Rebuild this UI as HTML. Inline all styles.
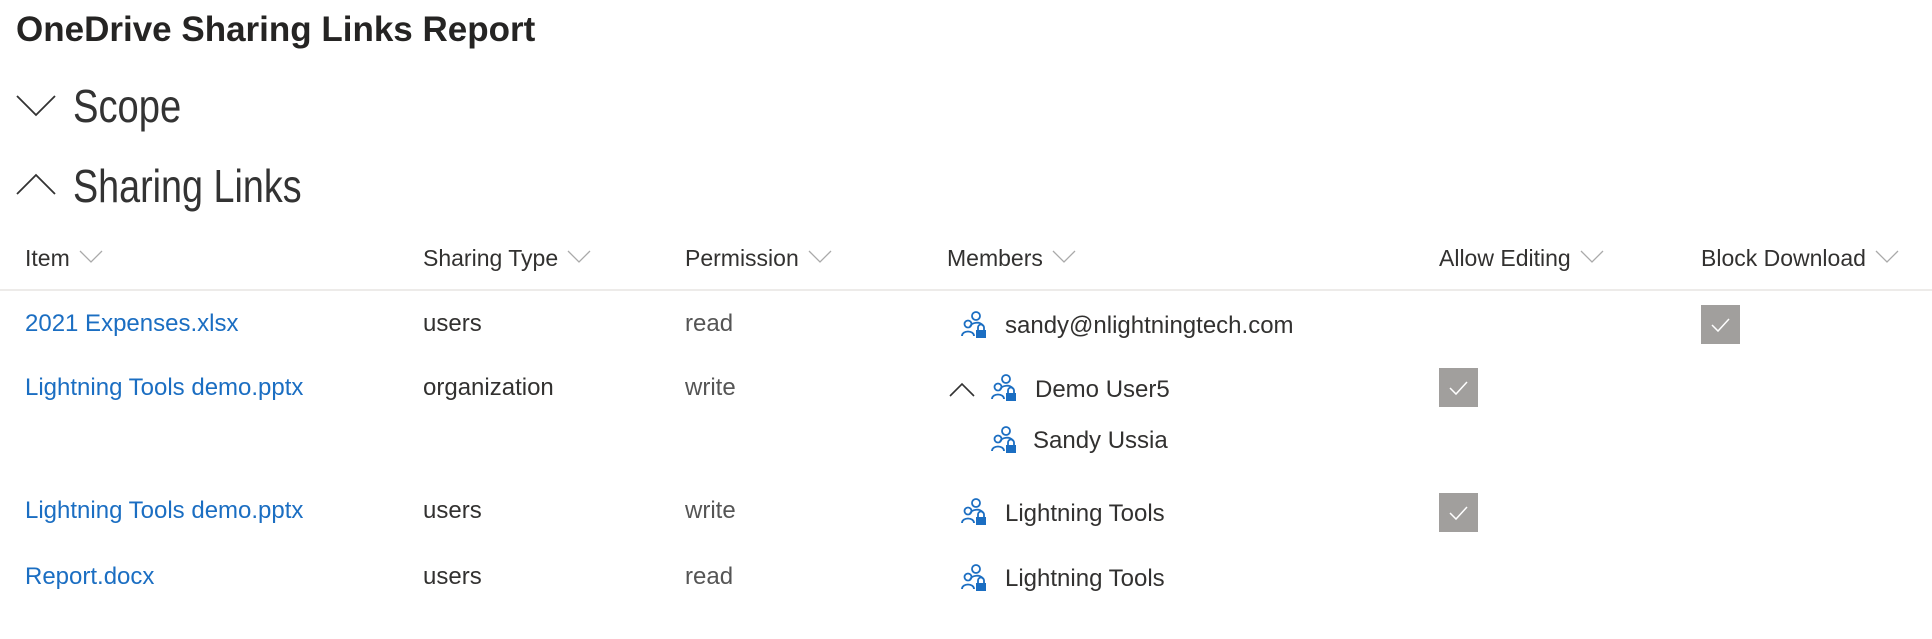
<!DOCTYPE html>
<html><head><meta charset="utf-8"><style>
body{margin:0;width:1932px;height:639px;background:#fff;font-family:"Liberation Sans",sans-serif;color:#323130;position:relative;overflow:hidden}
.a{position:absolute;white-space:nowrap}
.t{font-size:24px;line-height:28px}
.h{font-size:23px;color:#323130}
.h svg{margin-left:9px;vertical-align:2px}
.lnk{color:#1b6ec2}
.g{color:#555}
.cb{position:absolute;width:39px;height:39px;background:#a19f9d}
.sep{position:absolute;left:0;top:289px;width:1932px;height:2px;background:#edebe9}
</style></head><body>
<div class="a" style="left:16px;top:10px;font-size:35px;font-weight:bold;color:#252423">OneDrive Sharing Links Report</div>
<svg class="a" style="left:16px;top:94px" width="40" height="24"><path d="M1 2 L20 21 L39 2" fill="none" stroke="#333" stroke-width="1.8"/></svg>
<div class="a" style="left:73px;top:79px;font-size:46px;color:#333;transform:scaleX(0.83);transform-origin:left">Scope</div>
<svg class="a" style="left:16px;top:172px" width="40" height="24"><path d="M1 22 L20 3 L39 22" fill="none" stroke="#333" stroke-width="1.8"/></svg>
<div class="a" style="left:73px;top:159px;font-size:46px;color:#333;transform:scaleX(0.82);transform-origin:left">Sharing Links</div>

<div class="a h" style="left:25px;top:245px">Item<svg width="24" height="14"><path d="M1 1 L12 12 L23 1" fill="none" stroke="#aaa" stroke-width="1.3"/></svg></div>
<div class="a h" style="left:423px;top:245px">Sharing Type<svg width="24" height="14"><path d="M1 1 L12 12 L23 1" fill="none" stroke="#aaa" stroke-width="1.3"/></svg></div>
<div class="a h" style="left:685px;top:245px">Permission<svg width="24" height="14"><path d="M1 1 L12 12 L23 1" fill="none" stroke="#aaa" stroke-width="1.3"/></svg></div>
<div class="a h" style="left:947px;top:245px">Members<svg width="24" height="14"><path d="M1 1 L12 12 L23 1" fill="none" stroke="#aaa" stroke-width="1.3"/></svg></div>
<div class="a h" style="left:1439px;top:245px">Allow Editing<svg width="24" height="14"><path d="M1 1 L12 12 L23 1" fill="none" stroke="#aaa" stroke-width="1.3"/></svg></div>
<div class="a h" style="left:1701px;top:245px">Block Download<svg width="24" height="14"><path d="M1 1 L12 12 L23 1" fill="none" stroke="#aaa" stroke-width="1.3"/></svg></div>
<div class="sep"></div>

<svg width="0" height="0" style="position:absolute"><defs><symbol id="ic" viewBox="0 0 28 30"><g fill="none" stroke="#1b6ec2" stroke-width="1.8"><circle cx="7" cy="14" r="3.5"/><path d="M1 26 C1 20 13 20 13 26"/><circle cx="15" cy="6" r="4"/><path d="M9 17 C10 12 20 11 22 16"/></g><rect x="15" y="20" width="10" height="8" fill="#1b6ec2"/><path d="M17 20 V17.5 A3 3 0 0 1 23 17.5 V20" fill="none" stroke="#1b6ec2" stroke-width="1.8"/></symbol></defs></svg>

<div class="a t lnk" style="left:25px;top:310px">2021 Expenses.xlsx</div>
<div class="a t" style="left:423px;top:310px">users</div>
<div class="a t g" style="left:685px;top:310px">read</div>
<svg class="a" style="left:961px;top:310px" width="28" height="30"><use href="#ic"/></svg>
<div class="a t" style="left:1005px;top:312px">sandy@nlightningtech.com</div>
<div class="cb" style="left:1701px;top:305px"><svg width="39" height="39"><path d="M11 20 L17 26 L28 14" fill="none" stroke="#fff" stroke-width="1.5"/></svg></div>

<div class="a t lnk" style="left:25px;top:374px">Lightning Tools demo.pptx</div>
<div class="a t" style="left:423px;top:374px">organization</div>
<div class="a t g" style="left:685px;top:374px">write</div>
<svg class="a" style="left:949px;top:382px" width="26" height="16"><path d="M1 14 L13 2 L25 14" fill="none" stroke="#333" stroke-width="1.6"/></svg>
<svg class="a" style="left:991px;top:373px" width="28" height="30"><use href="#ic"/></svg>
<div class="a t" style="left:1035px;top:376px">Demo User5</div>
<div class="cb" style="left:1439px;top:368px"><svg width="39" height="39"><path d="M11 20 L17 26 L28 14" fill="none" stroke="#fff" stroke-width="1.5"/></svg></div>
<svg class="a" style="left:991px;top:425px" width="28" height="30"><use href="#ic"/></svg>
<div class="a t" style="left:1033px;top:427px">Sandy Ussia</div>

<div class="a t lnk" style="left:25px;top:497px">Lightning Tools demo.pptx</div>
<div class="a t" style="left:423px;top:497px">users</div>
<div class="a t g" style="left:685px;top:497px">write</div>
<svg class="a" style="left:961px;top:497px" width="28" height="30"><use href="#ic"/></svg>
<div class="a t" style="left:1005px;top:500px">Lightning Tools</div>
<div class="cb" style="left:1439px;top:493px"><svg width="39" height="39"><path d="M11 20 L17 26 L28 14" fill="none" stroke="#fff" stroke-width="1.5"/></svg></div>

<div class="a t lnk" style="left:25px;top:563px">Report.docx</div>
<div class="a t" style="left:423px;top:563px">users</div>
<div class="a t g" style="left:685px;top:563px">read</div>
<svg class="a" style="left:961px;top:563px" width="28" height="30"><use href="#ic"/></svg>
<div class="a t" style="left:1005px;top:565px">Lightning Tools</div>
</body></html>
